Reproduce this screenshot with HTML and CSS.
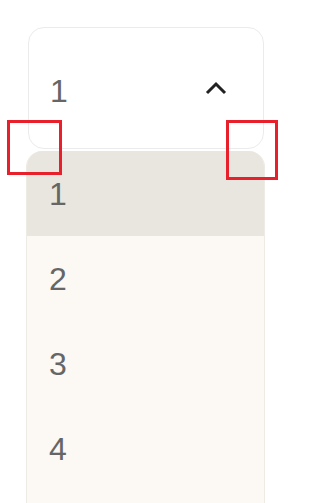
FILE: index.html
```html
<!DOCTYPE html>
<html>
<head>
<meta charset="utf-8">
<link rel="stylesheet" href="styles.css">
</head>
<body>
<div class="page">
  <div class="select">
    <span class="value">1</span>
    <svg class="chev" width="22" height="14" viewBox="0 0 22 14"><path d="M2 12 L11 3 L20 12" fill="none" stroke="#222" stroke-width="3"/></svg>
  </div>
  <ul class="menu">
    <li class="item active">1</li>
    <li class="item">2</li>
    <li class="item">3</li>
    <li class="item">4</li>
  </ul>
  <div class="mark mark-left"></div>
  <div class="mark mark-right"></div>
</div>
</body>
</html>
```
FILE: styles.css
```css
html, body { margin: 0; padding: 0; background: #fff; }
body { font-family: "Liberation Sans", Arial, sans-serif; overflow: hidden; }
.page { position: relative; width: 303px; height: 503px; padding: 27px 0 0 28px; box-sizing: border-box; overflow: hidden; }
.select {
  width: 236px; height: 122px; box-sizing: border-box;
  border: 1px solid #ebebeb; border-radius: 16px; background: #fff;
  display: flex; align-items: center; justify-content: space-between;
  padding: 0 36px 0 21px;
}
.value { font-size: 32px; color: #666; line-height: 1; margin-top: 6px; }
.chev { display: block; }
.menu {
  list-style: none; margin: 2px 0 0 -2px; padding: 0 0 40px;
  width: 239px; box-sizing: border-box;
  border-left: 1px solid #eeeae4; border-right: 1px solid #eeeae4;
  border-radius: 16px 16px 0 0; overflow: hidden; background: #fcf8f3;
}
.item {
  height: 85px; display: flex; align-items: center; padding: 1px 0 0 22px; box-sizing: border-box;
  font-size: 32px; color: #666; line-height: 1;
}
.item.active { background: #e9e6e0; }
.mark { position: absolute; border: 3px solid #e8202c; box-sizing: border-box; }
.mark-left { left: 7px; top: 120px; width: 55px; height: 55px; }
.mark-right { left: 226px; top: 120px; width: 52px; height: 60px; }
```
